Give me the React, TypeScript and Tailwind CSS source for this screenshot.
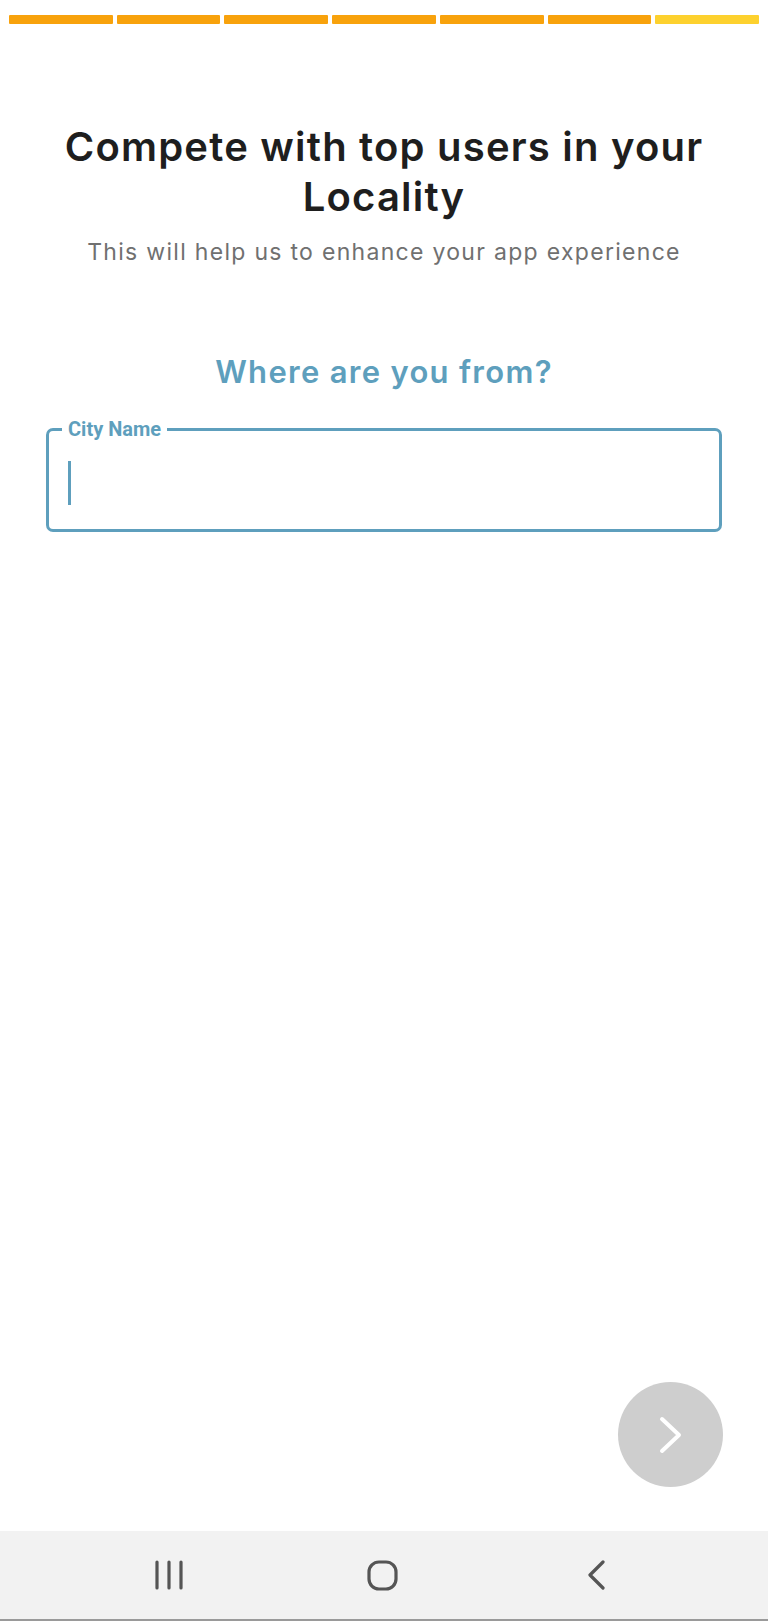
import React from 'react';

const steps = [0, 1, 2, 3, 4, 5, 6];

function ProgressBar() {
  return (
    <div className="flex gap-[4px] px-[9px] pt-[15px]">
      {steps.map((i) => (
        <div
          key={i}
          className={`h-[9px] flex-1 rounded-[1px] ${i === 6 ? 'bg-[#fdd12e]' : 'bg-[#f8a20c]'}`}
        />
      ))}
    </div>
  );
}

function CityField() {
  return (
    <div className="relative mx-[46px] mt-[38px] h-[104px] rounded-[7px] border-[3px] border-[#5e9fbd]">
      <span className="absolute left-[13px] top-[-15px] bg-white px-[6px] text-[20px] font-bold leading-[26px] text-[#5e9fbd] font-['Roboto',sans-serif]">
        City Name
      </span>
      <div className="ml-[19px] mt-[30px] h-[44px] w-[3px] bg-[#5e9fbd]" />
    </div>
  );
}

function NavBar() {
  return (
    <div className="flex h-[90px] items-center justify-between border-b-2 border-[#9a9a9a] bg-[#f2f2f2] pl-[154px] pr-[162px]">
      <svg width="30" height="30" viewBox="0 0 30 30" fill="none" stroke="#555" strokeWidth="3.2" strokeLinecap="round">
        <path d="M3 2v26M15 2v26M27 2v26" />
      </svg>
      <svg width="31" height="31" viewBox="0 0 31 31" fill="none" stroke="#555" strokeWidth="3.2" className="mr-[6px]">
        <rect x="2" y="2" width="27" height="27" rx="10" />
      </svg>
      <svg width="20" height="30" viewBox="0 0 20 30" fill="none" stroke="#555" strokeWidth="3.2" strokeLinecap="round" strokeLinejoin="round">
        <path d="M17 2L4 15l13 13" />
      </svg>
    </div>
  );
}

export default function App() {
  return (
    <div className="flex h-[1621px] w-[768px] flex-col bg-white font-['Inter',sans-serif]">
      <div className="flex flex-1 flex-col">
        <ProgressBar />
        <h1 className="mt-[98px] px-[30px] text-center text-[40px] font-semibold leading-[50px] tracking-[1.2px] text-[#1e1e1e]">
          Compete with top users in your Locality
        </h1>
        <p className="mt-[16px] text-center text-[23px] leading-[28px] tracking-[1.3px] text-[#707070]">
          This will help us to enhance your app experience
        </p>
        <h2 className="mt-[88px] text-center text-[31px] font-semibold leading-[36px] tracking-[1.3px] text-[#5e9fbd]">
          Where are you from?
        </h2>
        <CityField />
        <button className="mb-[44px] mr-[45px] mt-auto flex h-[105px] w-[105px] items-center justify-center self-end rounded-full bg-[#cecece]">
          <svg width="24" height="38" viewBox="0 0 24 38" fill="none" stroke="white" strokeWidth="4" strokeLinecap="round" strokeLinejoin="round">
            <path d="M3 3l17 16L3 35" />
          </svg>
        </button>
      </div>
      <NavBar />
    </div>
  );
}
